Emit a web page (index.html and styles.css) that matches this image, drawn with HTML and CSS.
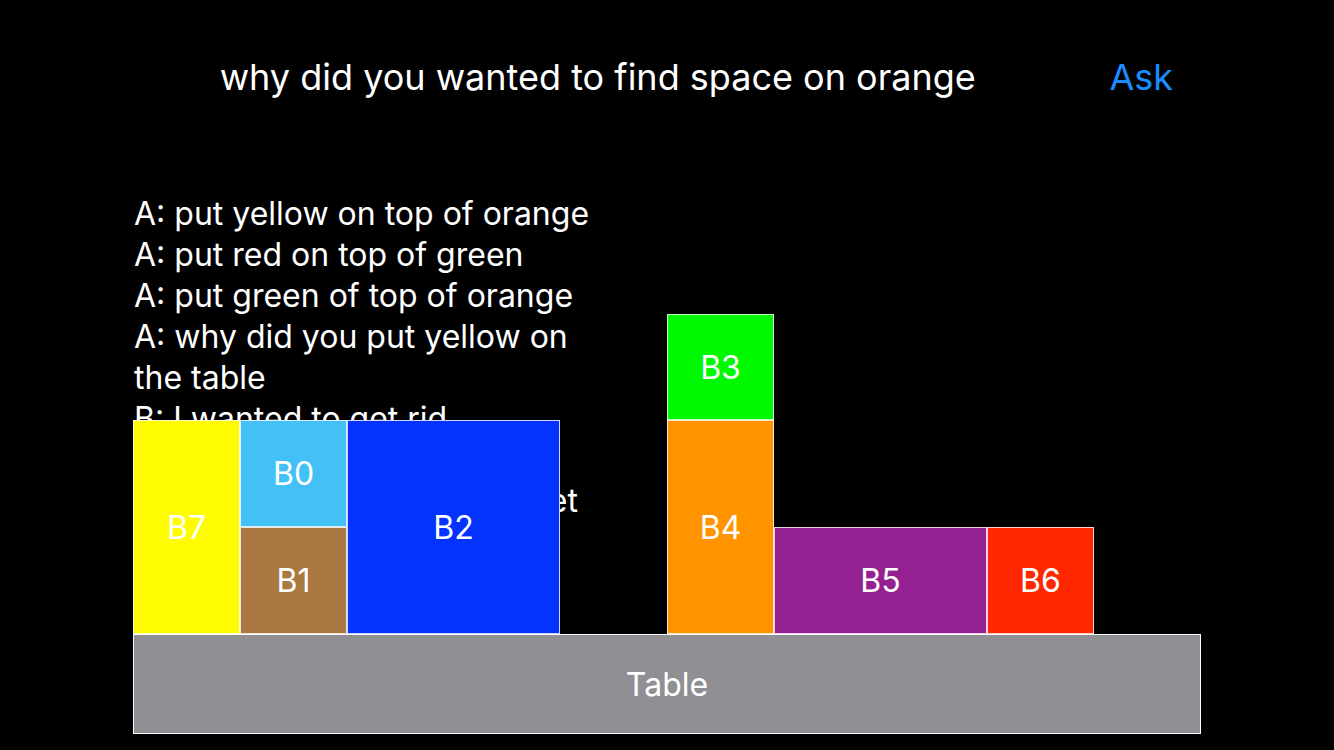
FILE: index.html
```html
<!DOCTYPE html>
<html>
<head>
<meta charset="utf-8">
<link rel="stylesheet" href="styles.css">
</head>
<body>
<header class="topbar">
  <div class="question">why did you wanted to find space on orange</div>
  <div class="ask">Ask</div>
</header>
<section class="transcript">
  <div class="msg">A: put yellow on top of orange</div>
  <div class="msg">A: put red on top of green</div>
  <div class="msg">A: put green of top of orange</div>
  <div class="msg">A: why did you put yellow on the table</div>
  <div class="msg">B: I wanted to get rid<br>of yellow so I could put<br>green on top of orange to get</div>
</section>
<div class="stage">
  <div class="block b7" style="left:0;top:106px;width:107px;height:214px">B7</div>
  <div class="block b0" style="left:107px;top:106px;width:107px;height:107px">B0</div>
  <div class="block b1" style="left:107px;top:213px;width:107px;height:107px">B1</div>
  <div class="block b2" style="left:214px;top:106px;width:213px;height:214px">B2</div>
  <div class="block b3" style="left:534px;top:0;width:107px;height:106px">B3</div>
  <div class="block b4" style="left:534px;top:106px;width:107px;height:214px">B4</div>
  <div class="block b5" style="left:641px;top:213px;width:213px;height:107px">B5</div>
  <div class="block b6" style="left:854px;top:213px;width:107px;height:107px">B6</div>
  <div class="block table" style="left:0;top:320px;width:1068px;height:100px">Table</div>
</div>
</body>
</html>
```
FILE: styles.css
```css
* { box-sizing: border-box; }
html, body {
  margin: 0;
  padding: 0;
  background: #000;
  width: 1334px;
  height: 750px;
  overflow: hidden;
  font-family: Inter, "Noto Sans", sans-serif;
  color: #fff;
}
body { position: relative; }
.topbar {
  display: flex;
  align-items: center;
  height: 154px;
  padding: 0 161px 0 134px;
}
.question {
  flex: 1;
  text-align: center;
  font-size: 36px;
  white-space: nowrap;
}
.ask {
  margin-left: 48px;
  font-size: 36px;
  color: #1A8CFF;
}
.transcript {
  width: 470px;
  margin-left: 134px;
  margin-top: 39px;
  font-size: 32px;
  line-height: 41px;
}
.stage {
  position: absolute;
  left: 133px;
  top: 314px;
  width: 1068px;
  height: 420px;
}
.block {
  position: absolute;
  display: flex;
  align-items: center;
  justify-content: center;
  border: 1px solid rgba(255,255,255,0.8);
  font-size: 32px;
  color: #fff;
}
.b7 { background: #FFFB00; }
.b0 { background: #43C1F6; }
.b1 { background: #AA7942; }
.b2 { background: #0433FF; }
.b3 { background: #00F900; }
.b4 { background: #FF9300; }
.b5 { background: #942192; }
.b6 { background: #FF2600; }
.table { background: #908F94; border-color: #fff; }
```
